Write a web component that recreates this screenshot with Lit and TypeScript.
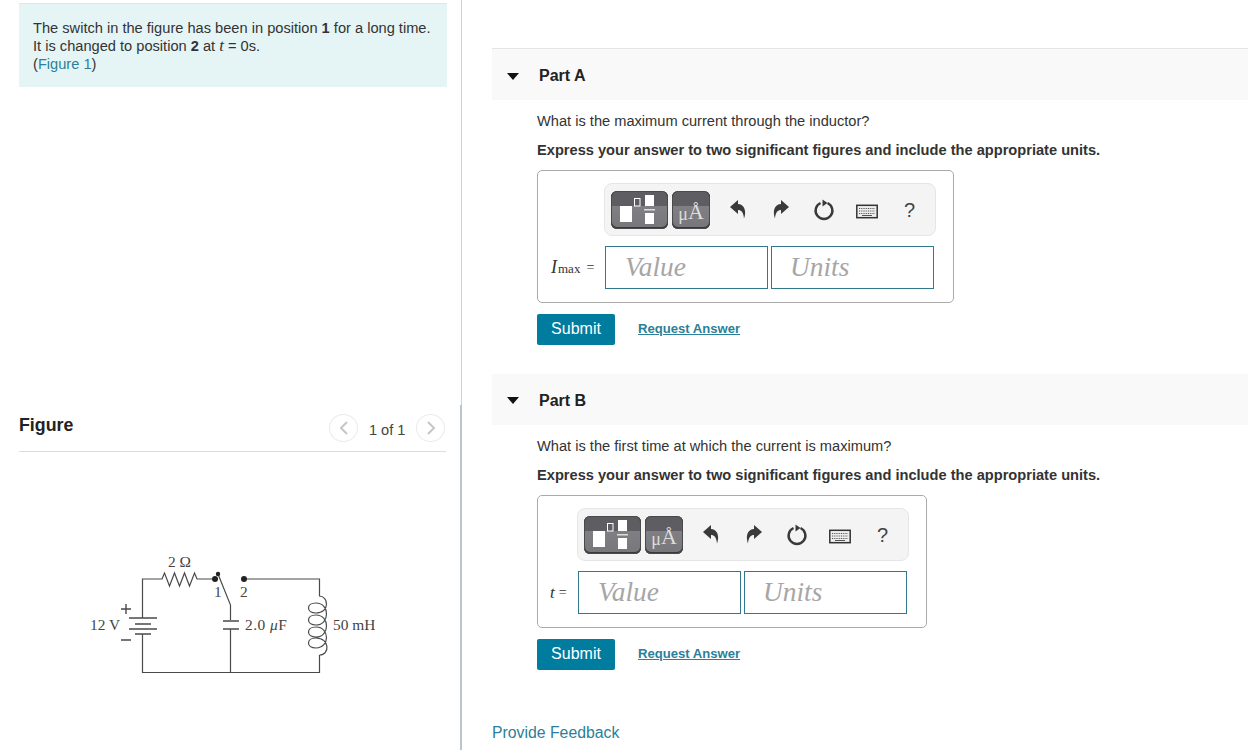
import { LitElement, html, css, svg } from "lit";
import { customElement } from "lit/decorators.js";

const circuit = svg`
<g fill="none" stroke="#4a4a4a" stroke-width="1.200">
  <path d="M62.500 78V39H82l2.500-6 5 13 5-13 5 13 5-13 5 13 5-13 2.500 6h15"/>
  <path d="M138 34l12.500 31V80"/>
  <path d="M150.500 89v43.500M62.500 94v38.500H239.500V115"/>
  <path d="M164 39H239.500V56"/>
  <path d="M143 81h16M143 89h16" stroke-width="1.400"/>
  <path d="M49 78h28M49 89h28" stroke-width="1.400"/>
  <path d="M55 84h16M55 94h16" stroke-width="1.600"/>
  <path d="M239 56C249 56 250 73 236 73 226 73 226 63 236 63 250 63 250 85 236 85 226 85 226 75 236 75 250 75 250 97 236 97 226 97 226 87 236 87 250 87 250 108 236 108 226 108 226 98 236 98 250 98 250 115 239.500 115"/>
  <path d="M41 69h10M46 64v10M41 100h10" stroke-width="1.400"/>
</g>
<circle cx="135" cy="39" r="3" fill="#222"/><circle cx="138" cy="34" r="2.200" fill="#222"/><circle cx="164" cy="39" r="3" fill="#222"/>
<g font-family="'Liberation Serif',serif" font-size="15.400" fill="#444">
  <text x="88" y="27">2 Ω</text>
  <text x="10" y="90">12 V</text>
  <text x="134" y="57">1</text>
  <text x="160" y="57">2</text>
  <text x="165" y="90" letter-spacing=".5">2.0 <tspan font-style="italic">μ</tspan>F</text>
  <text x="253" y="90">50 mH</text>
</g>`;

const undo = html`<svg class="ic" viewBox="0 0 16 19"><path d="M8 0L0 7l8 7v-4c3 0 5.500 2 6 8.500C16.500 12 15 4.500 8 4z"/></svg>`;
const redo = html`<svg class="ic" viewBox="0 0 16 19"><path d="M8 0l8 7-8 7v-4c-3 0-5.500 2-6 8.500C-.5 12 1 4.500 8 4z"/></svg>`;
const reset = html`<svg class="reset" viewBox="0 0 24 24"><path class="ring" d="M15.500 5A8.400 8.400 0 1 1 8.500 5"/><path d="M10.500 1.500l5 3.500-5 3.500z"/></svg>`;
const keyboard = html`<svg class="kb" viewBox="0 0 22 14"><rect x=".8" y=".8" width="20.400" height="12.400" fill="#eee" stroke="#333" stroke-width="1.500"/><path d="M3 4h16M3 6.500h16M3 9h16" stroke="#555" stroke-width="1.200" stroke-dasharray="1 .8"/><path d="M6 11h10" stroke="#555"/></svg>`;

const templates = html`<svg class="glyph" width="57" height="38" viewBox="0 0 57 38"><rect x="9" y="15" width="12" height="16" fill="#fff"/><rect x="23.500" y="7.500" width="5.500" height="7.500" fill="none" stroke="#fff"/><rect x="34" y="4" width="9" height="11" fill="#fff"/><rect x="33" y="18" width="11" height="1.500" fill="#ddd"/><rect x="34" y="22" width="9" height="11" fill="#fff"/></svg>`;

@customElement("app-root")
export class AppRoot extends LitElement {
  static styles = css`
    :host { display: block; width: 1248px; height: 750px; overflow: hidden; background: #fff; color: #333; font-family: "Liberation Sans", Arial, sans-serif; font-size: 14.640px; line-height: 18px; }
    * { box-sizing: border-box; }
    .page { display: flex; height: 750px; }
    .left { width: 462px; flex: none; display: flex; flex-direction: column; }
    .top { height: 405px; padding: 3px 0 0 19px; border-right: 1px solid #c9d1d8; }
    .note { width: 428px; height: 84px; padding: 15px 14px 0; background: #e5f5f6; border-top: 1px solid #dfe6e6; }
    .note i { font-family: "Liberation Serif", serif; font-size: 17px; }
    a { color: #2b7f98; }
    .note a { text-decoration: none; }
    .bottom { flex: 1; padding-left: 19px; border-right: 2px solid #bcc5cd; }
    .fig-head { width: 427px; height: 47px; padding-top: 9px; display: flex; justify-content: space-between; border-bottom: 1px solid #dcdcdc; }
    .fig-title { font-size: 17.800px; font-weight: 700; line-height: 20px; margin-top: 1px; color: #222; }
    .pager { display: flex; align-items: flex-start; gap: 10.500px; margin-right: 1px; line-height: 32px; color: #444; }
    .circle { width: 29px; height: 28px; border: 1px solid #ebebeb; border-radius: 50%; display: flex; align-items: center; justify-content: center; }
    .circle svg { width: 10px; height: 14px; fill: none; stroke: #c6c6c6; stroke-width: 2; }
    .circuit { display: block; margin: 88px 0 0 61px; }
    .right { flex: 1; padding: 48px 0 0 30px; }
    .part + .part { margin-top: 29px; }
    .part-head { height: 52px; padding-top: 3px; display: flex; align-items: center; background: #f9f9f9; border-top: 1px solid #e4e4e4; font-size: 16px; font-weight: 700; color: #222; }
    .part-b .part-head { height: 51px; padding-top: 1px; border-top-color: #f9f9f9; }
    .tri { width: 0; height: 0; margin: 0 20px 0 15px; border: 6.500px solid transparent; border-top: 7px solid #111; border-bottom: 0; }
    .body { padding-left: 45px; }
    .q { margin: 12px 0 0; }
    .req { margin: 11px 0 0; font-weight: 700; color: #333; }
    .box { width: 417px; height: 133px; margin-top: 11px; padding: 12px 19px 0 13px; border: 1px solid #aaa; border-radius: 5px; }
    .part-b .box { width: 390px; }
    .toolbar { width: 332px; height: 53px; margin-left: 54px; padding: 6px; display: flex; align-items: center; background: #f4f4f4; border: 1px solid #e6e6e6; border-radius: 8px; transform: translateX(-1px); }
    .part-b .toolbar { margin-left: 27px; }
    .btn { height: 38px; flex: none; box-shadow: inset 0 0 0 1px #4a4a4a, inset 0 -1px 0 1px #3a3a3a; border-radius: 6px; background: linear-gradient(#5e5d62 0, #5e5d62 40%, #807f84 40%, #77767b 100%); display: flex; align-items: center; justify-content: center; overflow: hidden; }
    .b1 { width: 57px; }
    .glyph { flex: none; display: block; }
    .b2 { width: 38px; margin-left: 4px; font-family: "Liberation Serif", serif; line-height: 1; color: #ddd; padding-top: 4px; }
    .b2 .mu { font-size: 18px; margin-top: 4px; }
    .b2 .ang { font-size: 22px; }
    .cell { width: 43px; height: 38px; flex: none; display: flex; align-items: center; justify-content: center; }
    .cell.first { margin-left: 6px; }
    .ic { width: 16px; height: 19px; fill: #3a3a3a; }
    .reset { width: 24px; height: 24px; fill: #3a3a3a; margin-top: 1px; }
    .reset .ring { fill: none; stroke: #3a3a3a; stroke-width: 2.400; }
    .kb { width: 22px; height: 15px; margin-top: 4px; }
    .qm { font-size: 20px; color: #444; }
    .row { display: flex; margin-top: 10px; }
    .label { width: 54px; flex: none; display: flex; align-items: center; font: 16px "Liberation Serif", serif; color: #333; }
    .part-b .label { width: 27px; margin-left: -1px; margin-right: 1px; }
    .label i { font-size: 18px; margin-right: 1px; }
    .label sub { font-size: 13px; line-height: 0; vertical-align: -3px; margin-right: 6px; padding-top: 3px; }
    .label .eq { font-size: 14px; }
    .part-b .label i { font-size: 17px; margin-right: 4px; }
    input { width: 163px; height: 43px; padding: 0 19px; border: 1px solid #33798d; border-radius: 0; outline: none; font: italic 27.400px "Liberation Serif", serif; background: #fff; }
    input + input { margin-left: 3px; padding-left: 18px; }
    input::placeholder { color: #a6a6a6; opacity: 1; }
    .actions { display: flex; align-items: center; margin-top: 11px; }
    .submit { width: 78px; height: 31px; border: 0; border-radius: 2px; padding: 0 0 2px; background: #007c9e; color: #fff; font: 16px "Liberation Sans", Arial, sans-serif; }
    .request { margin-left: 23px; margin-top: -2px; font-size: 13.100px; font-weight: 700; }
    .feedback { display: block; margin-top: 53px; font-size: 15.800px; line-height: 20px; text-decoration: none; }
  `;

  private part(cls: string, name: string, q: string, label: unknown) {
    return html`<section class="part ${cls}">
      <div class="part-head"><span class="tri"></span>${name}</div>
      <div class="body">
        <p class="q">${q}</p>
        <p class="req">Express your answer to two significant figures and include the appropriate units.</p>
        <div class="box">
          <div class="toolbar">
            <div class="btn b1">${templates}</div>
            <div class="btn b2"><span class="mu">μ</span><span class="ang">Å</span></div>
            <div class="cell first">${undo}</div>
            <div class="cell">${redo}</div>
            <div class="cell">${reset}</div>
            <div class="cell">${keyboard}</div>
            <div class="cell qm">?</div>
          </div>
          <div class="row">
            <div class="label">${label}</div>
            <input placeholder="Value" /><input placeholder="Units" />
          </div>
        </div>
        <div class="actions">
          <button class="submit">Submit</button>
          <a class="request" href="#">Request Answer</a>
        </div>
      </div>
    </section>`;
  }

  render() {
    return html`<div class="page">
      <div class="left">
        <div class="top">
          <div class="note">
            The switch in the figure has been in position <b>1</b> for a long time.<br />
            It is changed to position <b>2</b> at <i>t</i> = 0s.<br />
            (<a href="#">Figure 1</a>)
          </div>
        </div>
        <div class="bottom">
          <div class="fig-head">
            <div class="fig-title">Figure</div>
            <div class="pager">
              <span class="circle"><svg viewBox="0 0 10 14"><path d="M8 1L2 7l6 6"/></svg></span>
              <span>1 of 1</span>
              <span class="circle"><svg viewBox="0 0 10 14"><path d="M2 1l6 6-6 6"/></svg></span>
            </div>
          </div>
          <svg class="circuit" width="310" height="150" viewBox="0 0 310 150">${circuit}</svg>
        </div>
      </div>
      <div class="right">
        ${this.part("part-a", "Part A", "What is the maximum current through the inductor?", html`<i>I</i><sub>max</sub><span class="eq">=</span>`)}
        ${this.part("part-b", "Part B", "What is the first time at which the current is maximum?", html`<i>t</i><span class="eq">=</span>`)}
        <a class="feedback" href="#">Provide Feedback</a>
      </div>
    </div>`;
  }
}
